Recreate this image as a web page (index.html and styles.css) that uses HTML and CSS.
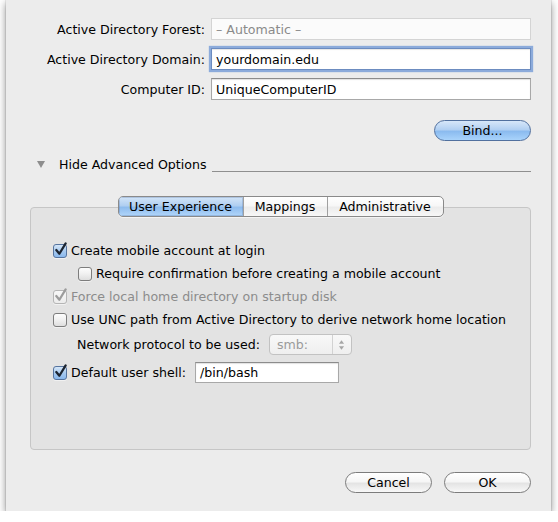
FILE: index.html
```html
<!DOCTYPE html>
<html>
<head>
<meta charset="utf-8">
<link rel="stylesheet" href="styles.css">
</head>
<body>
<div class="window">
  <div class="form">
    <label class="lbl">Active Directory Forest:</label>
    <div class="field disabled">– Automatic –</div>
    <label class="lbl">Active Directory Domain:</label>
    <div class="field focused">yourdomain.edu</div>
    <label class="lbl">Computer ID:</label>
    <div class="field">UniqueComputerID</div>
  </div>

  <div class="bind-row">
    <div class="btn blue bind">Bind...</div>
  </div>

  <div class="disclosure">
    <span class="tri"></span>
    <span class="dis-text">Hide Advanced Options</span>
    <span class="rule"></span>
  </div>

  <div class="tabs">
    <div class="seg">
      <span class="seg-item selected">User Experience</span>
      <span class="seg-item">Mappings</span>
      <span class="seg-item">Administrative</span>
    </div>
  </div>

  <div class="group">
    <div class="row">
      <span class="cb checked"><svg viewBox="0 0 16 16"><path d="M3.5 8 L6.8 12 L13.5 1" /></svg></span>
      <span>Create mobile account at login</span>
    </div>
    <div class="row indent">
      <span class="cb"></span>
      <span>Require confirmation before creating a mobile account</span>
    </div>
    <div class="row dim">
      <span class="cb checked disabled"><svg viewBox="0 0 16 16"><path d="M3.5 8 L6.8 12 L13.5 1" /></svg></span>
      <span>Force local home directory on startup disk</span>
    </div>
    <div class="row">
      <span class="cb"></span>
      <span>Use UNC path from Active Directory to derive network home location</span>
    </div>
    <div class="row proto">
      <span>Network protocol to be used:</span>
      <div class="popup">
        <span class="popup-text">smb:</span>
        <span class="popup-arrows">
          <svg viewBox="0 0 8 14"><path d="M1 5.5 L4 1.5 L7 5.5 Z M1 8.5 L4 12.5 L7 8.5 Z" /></svg>
        </span>
      </div>
    </div>
    <div class="row shell">
      <span class="cb checked"><svg viewBox="0 0 16 16"><path d="M3.5 8 L6.8 12 L13.5 1" /></svg></span>
      <span>Default user shell:</span>
      <div class="field small">/bin/bash</div>
    </div>
  </div>

  <div class="footer">
    <div class="btn plain">Cancel</div>
    <div class="btn plain">OK</div>
  </div>
</div>
</body>
</html>
```

FILE: styles.css
```css
html, body {
  margin: 0;
  padding: 0;
  background: #ffffff;
}

body {
  font-family: "DejaVu Sans", "Liberation Sans", sans-serif;
  font-size: 12.6px;
  color: #000;
}

.window {
  width: 545px;
  height: 511px;
  margin-left: 6px;
  box-sizing: border-box;
  padding: 18px 20px 0 24px;
  background: #ececec;
  box-shadow: 0 3px 8px rgba(0, 0, 0, 0.45), 0 0 1px rgba(0, 0, 0, 0.4);
  display: flex;
  flex-direction: column;
}

/* top form */
.form {
  display: grid;
  grid-template-columns: 175px 320px;
  grid-auto-rows: 22px;
  column-gap: 6px;
  row-gap: 8px;
  align-items: center;
}

.lbl {
  text-align: right;
  white-space: nowrap;
}

.field {
  height: 22px;
  box-sizing: border-box;
  background: #fff;
  border: 1px solid #a8a8a8;
  border-top-color: #8c8c8c;
  box-shadow: inset 0 1px 1px rgba(0, 0, 0, 0.12);
  padding: 0 4px;
  display: flex;
  align-items: center;
  white-space: nowrap;
}

.field.disabled {
  background: #fbfbfb;
  border-color: #d4d4d4;
  box-shadow: none;
  color: #8a8a8a;
}

.field.focused {
  border-color: #6c8cc0;
  box-shadow: 0 0 1px 2px rgba(108, 150, 214, 0.75), inset 0 1px 1px rgba(0, 0, 0, 0.1);
}

.field.small {
  width: 144px;
  height: 21px;
  margin-left: 9px;
}

/* buttons */
.btn {
  height: 21px;
  box-sizing: border-box;
  border-radius: 11px;
  display: flex;
  align-items: center;
  justify-content: center;
  white-space: nowrap;
}

.btn.blue {
  border: 1px solid #51709e;
  background: linear-gradient(to bottom, #d7e7f9 0%, #b2d0f2 45%, #8bbbef 55%, #a9d3fb 100%);
}

.btn.plain {
  width: 87px;
  border: 1px solid #7c7c7c;
  background: linear-gradient(to bottom, #ffffff 0%, #f6f6f6 45%, #e4e4e4 55%, #f8f8f8 100%);
}

.bind-row {
  display: flex;
  justify-content: flex-end;
  margin-top: 20px;
}

.bind {
  width: 97px;
}

/* disclosure */
.disclosure {
  display: flex;
  align-items: center;
  height: 17px;
  margin-top: 15px;
}

.tri {
  width: 0;
  height: 0;
  margin-left: 7px;
  border-left: 4.5px solid transparent;
  border-right: 4.5px solid transparent;
  border-top: 7px solid #8d8d8d;
}

.dis-text {
  margin-left: 14px;
  white-space: nowrap;
}

.rule {
  flex: 1;
  align-self: flex-end;
  margin-left: 5px;
  margin-bottom: 1px;
  border-top: 1px solid #8f8f8f;
}

/* tabs */
.tabs {
  display: flex;
  justify-content: center;
  margin-top: 23px;
  position: relative;
  z-index: 1;
}

.seg {
  display: flex;
  height: 21px;
  box-sizing: border-box;
  border: 1px solid #8a8a8a;
  border-radius: 5px;
  overflow: hidden;
  background: linear-gradient(to bottom, #ffffff 0%, #f7f7f7 45%, #ececec 55%, #f7f7f7 100%);
  box-shadow: 0 1px 0 rgba(255, 255, 255, 0.6);
}

.seg-item {
  display: flex;
  align-items: center;
  justify-content: center;
  white-space: nowrap;
  border-left: 1px solid #a0a0a0;
}

.seg-item:first-child {
  border-left: none;
  width: 124px;
}

.seg-item:nth-child(2) {
  width: 83px;
}

.seg-item:nth-child(3) {
  width: 115px;
}

.seg-item.selected {
  background: linear-gradient(to bottom, #d3e5f8 0%, #b0cff1 45%, #8ebcee 55%, #b1d6fa 100%);
  box-shadow: inset 0 0 0 1px rgba(70, 100, 150, 0.25);
}

/* group box */
.group {
  margin-top: -10px;
  height: 243px;
  box-sizing: border-box;
  border: 1px solid #c6c6c6;
  border-radius: 4px;
  background: #e3e3e3;
  padding: 31px 0 0 22px;
  display: flex;
  flex-direction: column;
}

.row {
  display: flex;
  align-items: center;
  height: 23px;
  white-space: nowrap;
}

.row .cb {
  margin-right: 4px;
}

.row.indent {
  padding-left: 25px;
}

.row.dim {
  color: #8c8c8c;
}

.row.proto {
  padding-left: 24px;
  margin-top: 2px;
}

.row.shell {
  margin-top: 5px;
}

.cb {
  width: 14px;
  height: 14px;
  box-sizing: border-box;
  border: 1px solid #7d7d7d;
  border-radius: 3px;
  background: linear-gradient(to bottom, #fdfdfd 0%, #f0f0f0 50%, #dedede 100%);
  box-shadow: 0 1px 0 rgba(255, 255, 255, 0.5);
  position: relative;
  flex: none;
}

.cb.checked {
  border-color: #56749f;
  background: linear-gradient(to bottom, #d5e6f8 0%, #a8caef 50%, #8ab8ec 100%);
}

.cb.checked.disabled {
  border-color: #b5b5b5;
  background: linear-gradient(to bottom, #f7f7f7 0%, #ececec 100%);
}

.cb svg {
  position: absolute;
  left: -1px;
  top: -3px;
  width: 15px;
  height: 16px;
  fill: none;
  stroke: #1c2430;
  stroke-width: 2.4;
  stroke-linecap: round;
  stroke-linejoin: round;
}

.cb.disabled svg {
  stroke: #9c9c9c;
}

/* popup */
.popup {
  margin-left: 9px;
  width: 83px;
  height: 21px;
  box-sizing: border-box;
  border: 1px solid #c2c2c2;
  border-radius: 4px;
  background: linear-gradient(to bottom, #f8f8f8 0%, #efefef 100%);
  display: flex;
  align-items: center;
}

.popup-text {
  flex: 1;
  padding-left: 7px;
  color: #9b9b9b;
}

.popup-arrows {
  width: 18px;
  height: 100%;
  border-left: 1px solid #d2d2d2;
  display: flex;
  align-items: center;
  justify-content: center;
}

.popup-arrows svg {
  width: 7px;
  height: 12px;
  fill: #a6a6a6;
}

/* footer */
.footer {
  display: flex;
  justify-content: flex-end;
  gap: 12px;
  margin-top: 22px;
}
```
